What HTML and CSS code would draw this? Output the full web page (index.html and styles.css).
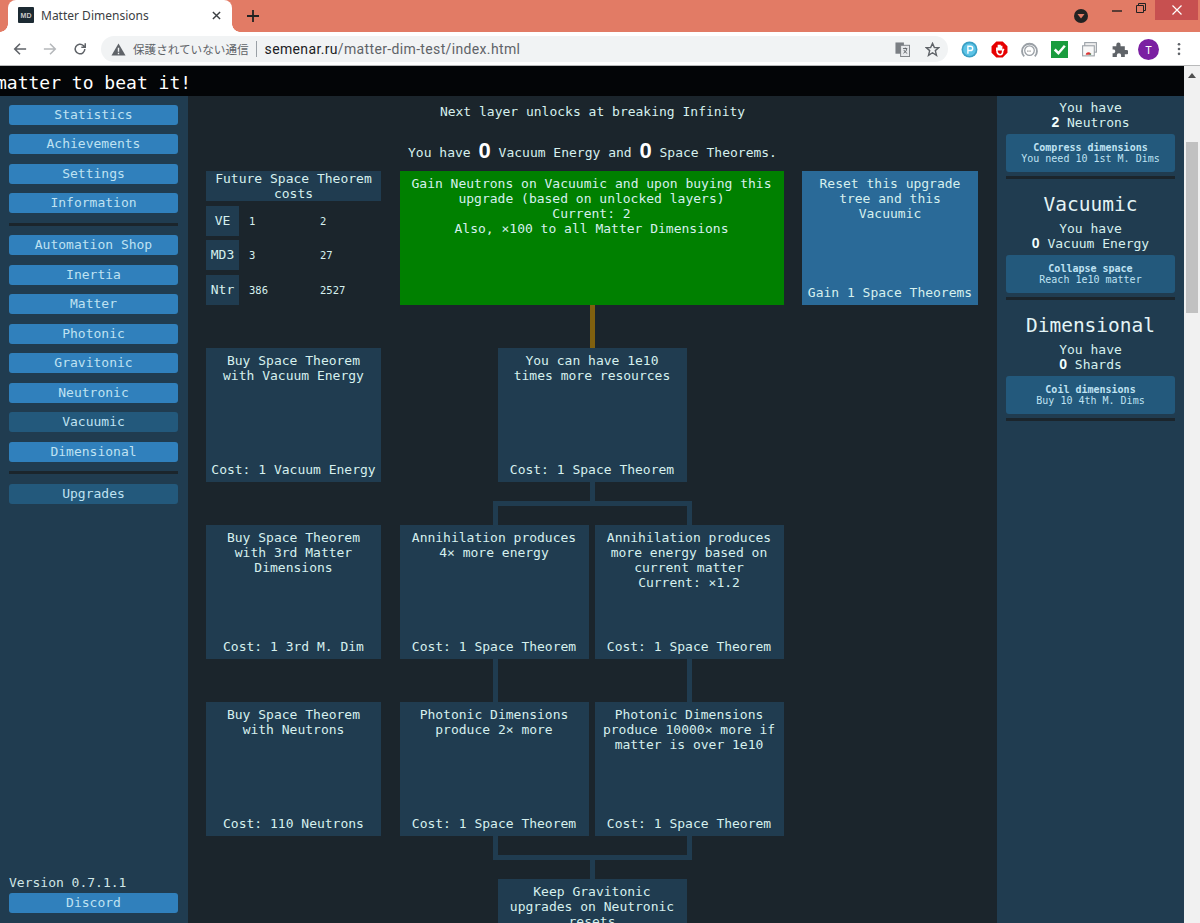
FILE: index.html
```html
<!DOCTYPE html>
<html lang="en">
<head>
<meta charset="utf-8">
<title>Matter Dimensions</title>
<link rel="stylesheet" href="styles.css">
</head>
<body>
<div class="tabstrip">
  <div class="tab">
    <svg class="favicon" viewBox="0 0 16 16"><rect width="16" height="16" rx="1" fill="#1c2a33"/><text x="8" y="11" text-anchor="middle" class="favtext">MD</text></svg>
    <span class="tab-title">Matter Dimensions</span>
    <svg class="tab-x" viewBox="0 0 10 10"><path d="M1 1L9 9M9 1L1 9" stroke="#3c4043" stroke-width="1.6" fill="none"/></svg>
  </div>
  <svg class="tab-new" viewBox="0 0 12 12"><path d="M6 0V12M0 6H12" stroke="#222" stroke-width="1.8" fill="none"/></svg>
  <div class="strip-right">
    <svg class="media" viewBox="0 0 14 14"><circle cx="7" cy="7" r="7" fill="#222"/><path d="M3.5 5H10.500L7 9.500Z" fill="#e27b65"/></svg>
    <svg class="win win-min" viewBox="0 0 10 10"><path d="M0 5H10" stroke="#222" stroke-width="1.4"/></svg>
    <svg class="win win-max" viewBox="0 0 10 10"><path d="M0.500 2.500H7.500V9.500H0.500ZM2.500 2.500V0.500H9.500V7.500H7.500" stroke="#222" fill="none"/></svg>
    <div class="win-close"><svg viewBox="0 0 10 10"><path d="M0.500 0.500L9.500 9.500M9.500 0.500L0.500 9.500" stroke="#fff" stroke-width="1.2"/></svg></div>
  </div>
</div>
<div class="toolbar">
  <svg class="nav" viewBox="0 0 16 16"><path d="M15 8H2M8 2L2 8L8 14" stroke="#5f6368" stroke-width="1.800" fill="none"/></svg>
  <svg class="nav" viewBox="0 0 16 16"><path d="M1 8H14M8 2L14 8L8 14" stroke="#b5b8bb" stroke-width="1.800" fill="none"/></svg>
  <svg class="nav" viewBox="0 0 16 16"><path d="M13.500 8A5.500 5.500 0 1 1 11.800 4L13.500 5.700M14 1.500V6H9.500" stroke="#5f6368" stroke-width="1.700" fill="none"/></svg>
  <div class="omnibox">
    <svg class="warn" viewBox="0 0 16 16"><path d="M8 1.500L15.500 14.500H0.500Z" fill="#5f6368"/><path d="M8 6V10.500M8 11.500V13" stroke="#f1f3f4" stroke-width="1.500"/></svg>
    <span class="insecure">保護されていない通信</span>
    <span class="url"><span class="host">semenar.ru</span>/matter-dim-test/index.html</span>
    <svg class="omni-icon" viewBox="0 0 16 16"><rect x="0.500" y="0.500" width="9" height="12" fill="#7b7f84"/><rect x="6" y="3.500" width="9.500" height="12" fill="#e8eaed" stroke="#7b7f84"/><path d="M8.500 7H13M11 6V7.500M9 12C11 11 12.500 9 12.500 7M9.500 8.500C10 10 11.500 11.500 13 12" stroke="#5f6368" fill="none"/></svg>
    <svg class="omni-icon star" viewBox="0 0 16 16"><path d="M8 1.500L10 6H14.800L11 9.200L12.300 14.300L8 11.500L3.700 14.300L5 9.200L1.200 6H6Z" stroke="#5f6368" stroke-width="1.500" fill="none"/></svg>
  </div>
  <div class="exts">
    <svg class="ext" viewBox="0 0 16 16"><circle cx="8" cy="8" r="7.500" fill="#3a9fc4"/><circle cx="8" cy="8" r="6" fill="#5cc3e6"/><path d="M6.500 12V5H9A2 2 0 0 1 9 9H6.500" stroke="#fff" stroke-width="1.300" fill="none"/></svg>
    <svg class="ext" viewBox="0 0 16 16"><path d="M5 0.500H11L15.500 5V11L11 15.500H5L0.500 11V5Z" fill="#e60000"/><path d="M5.500 9.500V6M7 9V3.500M8.500 9V3.500M10 9V4.500M5.500 9.500C6 12 7 13 8.500 13C10 13 11 11.500 11 9.500L12 7.500" stroke="#fff" stroke-width="1.500" fill="none"/></svg>
    <svg class="ext" viewBox="0 0 16 16"><path d="M3 14.500A7 7 0 1 1 13 14.500" stroke="#9aa0a6" stroke-width="1.800" fill="none"/><circle cx="8" cy="9" r="4.500" stroke="#9aa0a6" stroke-width="1.200" fill="#fff"/><path d="M6 9.500H10" stroke="#777" stroke-dasharray="1 1"/></svg>
    <svg class="ext" viewBox="0 0 16 16"><rect width="16" height="16" fill="#1a9c3e"/><path d="M3.500 8L7 11.500L13 4.500" stroke="#fff" stroke-width="2.400" fill="none"/></svg>
    <svg class="ext" viewBox="0 0 16 16"><rect x="3.500" y="1.500" width="11" height="9" fill="#eee" stroke="#9aa0a6"/><rect x="1.500" y="4.500" width="11" height="9.500" fill="#f8f8f8" stroke="#9aa0a6"/><path d="M4.500 13A2.500 2.500 0 0 1 9.500 13Z" fill="#d33"/><path d="M7 13H9.500V11.500Z" fill="#3a7"/></svg>
    <svg class="ext" viewBox="0 0 16 16"><path d="M1.500 5H5V3.500A2 2 0 0 1 9 3.500V5H13V8.500H14.500A2 2 0 0 1 14.500 12.500H13V15H9.500V13.500A2 2 0 0 0 5.500 13.500V15H1.500V11.500H3A2 2 0 0 0 3 8H1.500Z" fill="#5f6368"/></svg>
    <div class="avatar">T</div>
    <svg class="kebab" viewBox="0 0 4 16"><circle cx="2" cy="2.500" r="1.500" fill="#5f6368"/><circle cx="2" cy="8" r="1.500" fill="#5f6368"/><circle cx="2" cy="13.500" r="1.500" fill="#5f6368"/></svg>
  </div>
</div>
<div class="viewport">
  <div class="page">
    <div class="ticker">matter to beat it!</div>
    <div class="columns">
      <nav class="sidebar">
        <a class="btn">Statistics</a>
        <a class="btn">Achievements</a>
        <a class="btn">Settings</a>
        <a class="btn">Information</a>
        <hr class="rule">
        <a class="btn">Automation Shop</a>
        <a class="btn">Inertia</a>
        <a class="btn">Matter</a>
        <a class="btn">Photonic</a>
        <a class="btn">Gravitonic</a>
        <a class="btn">Neutronic</a>
        <a class="btn dim">Vacuumic</a>
        <a class="btn">Dimensional</a>
        <hr class="rule">
        <a class="btn dim">Upgrades</a>
        <div class="side-foot">
          <div class="version">Version 0.7.1.1</div>
          <a class="btn">Discord</a>
        </div>
      </nav>
      <main class="main">
        <p class="next">Next layer unlocks at breaking Infinity</p>
        <p class="have">You have <b class="big">0</b> Vacuum Energy and <b class="big">0</b> Space Theorems.</p>
        <div class="tree">
          <div class="row">
            <div class="costs">
              <div class="costs-head">Future Space Theorem costs</div>
              <div class="costs-row"><span class="costs-key">VE</span><span class="costs-a">1</span><span>2</span></div>
              <div class="costs-row"><span class="costs-key">MD3</span><span class="costs-a">3</span><span>27</span></div>
              <div class="costs-row"><span class="costs-key">Ntr</span><span class="costs-a">386</span><span>2527</span></div>
            </div>
            <div class="box bought"><span>Gain Neutrons on Vacuumic and upon buying this upgrade (based on unlocked layers)<br>Current: 2<br>Also, ×100 to all Matter Dimensions</span></div>
            <div class="box reset"><span>Reset this upgrade tree and this Vacuumic</span><span>Gain 1 Space Theorems</span></div>
          </div>
          <div class="links"><div class="stem amber"></div></div>
          <div class="row">
            <div class="box"><span>Buy Space Theorem with Vacuum Energy</span><span>Cost: 1 Vacuum Energy</span></div>
            <div class="middle"><div class="box solo"><span>You can have 1e10 times more resources</span><span>Cost: 1 Space Theorem</span></div></div>
          </div>
          <div class="links">
            <div class="stem short"></div>
            <div class="fork-down"></div>
          </div>
          <div class="row">
            <div class="box"><span>Buy Space Theorem with 3rd Matter Dimensions</span><span>Cost: 1 3rd M. Dim</span></div>
            <div class="twin">
              <div class="box"><span>Annihilation produces 4× more energy</span><span>Cost: 1 Space Theorem</span></div>
              <div class="box"><span>Annihilation produces more energy based on current matter<br>Current: ×1.2</span><span>Cost: 1 Space Theorem</span></div>
            </div>
          </div>
          <div class="links"><div class="pair"></div></div>
          <div class="row">
            <div class="box"><span>Buy Space Theorem with Neutrons</span><span>Cost: 110 Neutrons</span></div>
            <div class="twin">
              <div class="box"><span>Photonic Dimensions produce 2× more</span><span>Cost: 1 Space Theorem</span></div>
              <div class="box"><span>Photonic Dimensions produce 10000× more if matter is over 1e10</span><span>Cost: 1 Space Theorem</span></div>
            </div>
          </div>
          <div class="links">
            <div class="fork-up"></div>
            <div class="stem short"></div>
          </div>
          <div class="row">
            <div class="spacer"></div>
            <div class="middle"><div class="box solo"><span>Keep Gravitonic upgrades on Neutronic resets</span></div></div>
          </div>
        </div>
      </main>
      <aside class="layers">
        <div class="amount">You have<br><b>2</b> Neutrons</div>
        <a class="reset-btn"><b>Compress dimensions</b>You need 10 1st M. Dims</a>
        <hr class="rule wide-rule">
        <h2 class="layer-name">Vacuumic</h2>
        <div class="amount">You have<br><b>0</b> Vacuum Energy</div>
        <a class="reset-btn"><b>Collapse space</b>Reach 1e10 matter</a>
        <hr class="rule wide-rule">
        <h2 class="layer-name">Dimensional</h2>
        <div class="amount">You have<br><b>0</b> Shards</div>
        <a class="reset-btn"><b>Coil dimensions</b>Buy 10 4th M. Dims</a>
        <hr class="rule wide-rule">
      </aside>
    </div>
  </div>
  <div class="scrollbar">
    <svg class="scroll-up" viewBox="0 0 8 5"><path d="M0 5L4 0L8 5Z" fill="#505050"/></svg>
    <div class="thumb"></div>
  </div>
</div>
</body>
</html>
```
FILE: styles.css
```css
* { box-sizing: border-box; }
html, body { margin: 0; height: 923px; overflow: hidden; }
body { display: flex; flex-direction: column; font-family: "DejaVu Sans Mono", "Liberation Mono", monospace; background: #1b252c; }

.tabstrip { height: 32px; flex: none; background: #e27b65; display: flex; align-items: flex-start; padding-left: 8px; }
.tab { position: relative; width: 224px; height: 32px; background: #fff; border-radius: 8px 8px 0 0; display: flex; align-items: center; padding: 0 10px 2px; font: 12px "Noto Sans", sans-serif; color: #3c4043; }
.tab::before, .tab::after { content: ""; position: absolute; bottom: 0; width: 8px; height: 8px; }
.tab::before { left: -8px; background: radial-gradient(circle at 0 0, transparent 7.5px, #fff 8px); }
.tab::after { right: -8px; background: radial-gradient(circle at 100% 0, transparent 7.5px, #fff 8px); }
.favicon { width: 16px; height: 16px; margin-right: 7px; }
.favtext { font: bold 7px "Liberation Sans", sans-serif; fill: #c8c8c8; }
.tab-title { flex: 1; }
.tab-x { width: 9px; height: 9px; margin-right: 1px; }
.tab-new { width: 12px; height: 12px; margin: 10px 0 0 15px; }
.strip-right { margin-left: auto; display: flex; align-items: flex-start; }
.media { width: 14px; height: 14px; margin: 9px 24px 0 0; }
.win { width: 10px; height: 10px; margin-right: 14px; }
.win-min { margin-top: 6px; }
.win-max { margin-top: 3px; margin-right: 9px; }
.win-close { width: 43px; height: 20px; margin-right: 2px; background: #c75050; display: flex; align-items: center; justify-content: center; }
.win-close svg { width: 10px; height: 10px; }

.toolbar { height: 34px; flex: none; background: #fff; border-bottom: 1px solid #b9babb; display: flex; align-items: center; padding: 1px 0 0 13px; }
.nav { width: 14px; height: 14px; margin-right: 16px; flex: none; }
.omnibox { width: 847px; height: 26px; margin-left: -2px; background: #f1f3f4; border-radius: 13px; display: flex; align-items: center; padding: 0 8px 0 10px; }
.warn { width: 15px; height: 15px; flex: none; margin-right: 7px; }
.insecure { font: 11.600px "Noto Sans CJK JP", sans-serif; color: #5f6368; padding-right: 7px; border-right: 1px solid #9aa0a6; line-height: 16px; }
.url { flex: 1; padding-left: 8px; font: 14px "Roboto", sans-serif; color: #5f6368; letter-spacing: .35px; }
.host { color: #202124; }
.omni-icon { width: 15px; height: 15px; margin-left: 15px; flex: none; }
.exts { display: flex; align-items: center; margin-left: 13px; }
.ext { width: 17px; height: 17px; margin-right: 13px; flex: none; }
.avatar { width: 21px; height: 21px; border-radius: 50%; background: #7b1fa2; color: #fff; font: 11px "Noto Sans", sans-serif; display: flex; align-items: center; justify-content: center; margin-left: -3px; margin-right: 18px; }
.kebab { width: 4px; height: 14px; }

.viewport { flex: 1; min-height: 0; display: flex; }
.page { flex: 1; min-width: 0; display: flex; flex-direction: column; }
.ticker { height: 30px; flex: none; background: #030507; color: #fff; font-size: 18px; line-height: 33px; text-indent: -4px; white-space: nowrap; overflow: hidden; }
.columns { flex: 1; min-height: 0; display: flex; color: #d6f0ee; font-size: 13px; line-height: 15px; }

.sidebar { width: 188px; flex: none; background: #203c50; padding: 8.500px 10px 10px 9px; display: flex; flex-direction: column; }
.btn { display: block; height: 20px; flex: none; margin-bottom: 9.500px; background: #3080bc; color: #bfe2f2; border-radius: 3px; text-align: center; line-height: 20px; font-size: 13px; }
.btn.dim { background: #23597c; }
.rule { height: 3px; width: 100%; border: 0; margin: 0 0 9.500px; background: #1b252c; flex: none; }
.side-foot { margin-top: auto; }
.version { color: #d0e6e6; margin-bottom: 3px; white-space: nowrap; font-size: 13px; }
.side-foot .btn { margin-bottom: 0; }

.main { flex: 1; min-width: 0; overflow: hidden; padding-top: 8px; text-align: center; }
.next { margin: 0; line-height: 15px; }
.have { margin: 19px 0 0; height: 30px; line-height: 30px; }
.big { font-family: "Liberation Sans", sans-serif; font-size: 22px; font-weight: 700; color: #fff; vertical-align: -1px; line-height: 20px; }
.tree { width: 772px; margin: 3px 0 0 18px; }
.row { display: grid; grid-template-columns: 175px 384px 176px; column-gap: 18.500px; height: 134px; }
.box { background: #203c50; padding: 5px; display: flex; flex-direction: column; justify-content: space-between; height: 134px; overflow: hidden; text-align: center; }
.bought { background: #008000; justify-content: flex-start; }
.reset { background: #2a6a98; }
.twin { display: grid; grid-template-columns: 189px 189px; column-gap: 6px; }
.middle { display: flex; justify-content: center; }
.solo { width: 189px; flex: none; margin-left: 1px; }

.costs-head { background: #203c50; height: 30px; padding: 0 5px; }
.costs-row { display: flex; align-items: center; height: 30px; margin-top: 5px; font-size: 10.500px; text-align: left; }
.costs-row:nth-child(3) { margin-top: 4px; }
.costs-key { width: 33px; height: 30px; line-height: 30px; background: #203c50; font-size: 13px; text-align: center; flex: none; margin-right: 10px; }
.costs-a { width: 71px; flex: none; }

.links { display: flex; flex-direction: column; align-items: center; height: 43px; width: 772px; padding: 0 194px 0 195px; }
.stem { width: 5px; height: 43px; background: #203c50; flex: none; }
.stem.amber { background: #80600f; }
.stem.short { height: 19px; }
.fork-down, .fork-up { width: 199px; height: 24px; border: 5px solid #203c50; flex: none; }
.fork-down { border-bottom: 0; }
.fork-up { border-top: 0; }
.pair { width: 199px; height: 43px; border: 5px solid #203c50; border-width: 0 5px; flex: none; }

.layers { width: 187px; flex: none; background: #203c50; padding: 4px 9px 0; text-align: center; font-size: 13px; }
.amount b { font-family: "Liberation Sans", sans-serif; font-size: 14px; color: #f2ffff; }
.reset-btn { display: block; margin-top: 4px; height: 37.500px; background: #23597c; border-radius: 3px; padding-top: 8px; color: #bfe2f2; font-size: 10px; line-height: 11px; }
.reset-btn b { display: block; }
.wide-rule { margin: 4px 0 0; }
.layer-name { margin: 14.500px 0 4px; font-size: 19.500px; font-weight: 400; line-height: 24px; color: #e4f4f6; }

.scrollbar { width: 16px; flex: none; background: #f1f1f1; padding: 0 2px; display: flex; flex-direction: column; }
.scroll-up { width: 8px; height: 5px; margin: 7px 2px 0; flex: none; }
.thumb { height: 171px; margin-top: 64px; background: #c1c1c1; flex: none; }
```
